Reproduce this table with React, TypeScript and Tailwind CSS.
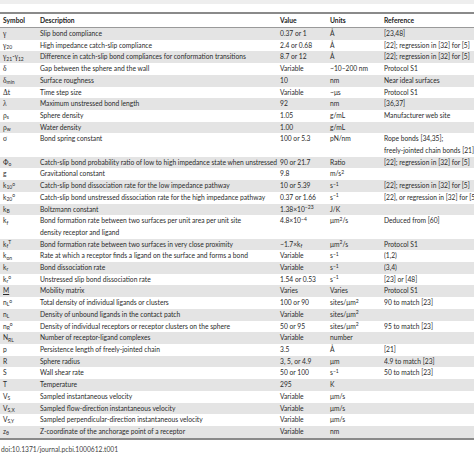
import type { ReactNode } from "react";

type Row = {
  sym: ReactNode;
  desc: ReactNode;
  value: ReactNode;
  units: ReactNode;
  refs?: ReactNode;
};

// greek letters look like they come from a serif face in the original
function G({ children }: { children: ReactNode }) {
  return (
    <span className="font-['Liberation_Serif',serif] text-[7.5px]">
      {children}
    </span>
  );
}

function Sb({ children }: { children: ReactNode }) {
  return <sub className="text-[5px]">{children}</sub>;
}

function Sp({ children }: { children: ReactNode }) {
  return <sup className="text-[5px]">{children}</sup>;
}

const invS = (
  <>
    s<Sp>−1</Sp>
  </>
);
const sitesUm2 = (
  <>
    sites/μm<Sp>2</Sp>
  </>
);
const reg = "[22]; regression in [32] for [5]";

const rows: Row[] = [
  { sym: <G>γ</G>, desc: "Slip bond compliance", value: "0.37 or 1", units: "Å", refs: "[23,48]" },
  { sym: <><G>γ</G><Sb>20</Sb></>, desc: "High impedance catch-slip compliance", value: "2.4 or 0.68", units: "Å", refs: reg },
  {
    sym: <><G>γ</G><Sb>21</Sb>-<G>γ</G><Sb>12</Sb></>,
    desc: "Difference in catch-slip bond compliances for conformation transitions",
    value: "8.7 or 12",
    units: "Å",
    refs: reg,
  },
  { sym: <G>δ</G>, desc: "Gap between the sphere and the wall", value: "Variable", units: "~10–200 nm", refs: "Protocol S1" },
  { sym: <><G>δ</G><Sb>min</Sb></>, desc: "Surface roughness", value: "10", units: "nm", refs: "Near ideal surfaces" },
  { sym: <><G>Δ</G>t</>, desc: "Time step size", value: "Variable", units: "~μs", refs: "Protocol S1" },
  { sym: <G>λ</G>, desc: "Maximum unstressed bond length", value: "92", units: "nm", refs: "[36,37]" },
  { sym: <><G>ρ</G><Sb>s</Sb></>, desc: "Sphere density", value: "1.05", units: "g/mL", refs: "Manufacturer web site" },
  { sym: <><G>ρ</G><Sb>w</Sb></>, desc: "Water density", value: "1.00", units: "g/mL" },
  {
    sym: <G>σ</G>,
    desc: "Bond spring constant",
    value: "100 or 5.3",
    units: "pN/nm",
    refs: (
      <>
        Rope bonds [34,35];
        <br />
        freely-jointed chain bonds [21]
      </>
    ),
  },
  {
    sym: <><G>Φ</G><Sb>o</Sb></>,
    desc: "Catch-slip bond probability ratio of low to high impedance state when unstressed",
    value: "90 or 21.7",
    units: "Ratio",
    refs: reg,
  },
  { sym: "g", desc: "Gravitational constant", value: "9.8", units: <>m/s<Sp>2</Sp></> },
  {
    sym: <>k<Sb>10</Sb><Sp>o</Sp></>,
    desc: "Catch-slip bond dissociation rate for the low impedance pathway",
    value: "10 or 5.39",
    units: invS,
    refs: reg,
  },
  {
    sym: <>k<Sb>20</Sb><Sp>o</Sp></>,
    desc: "Catch-slip bond unstressed dissociation rate for the high impedance pathway",
    value: "0.37 or 1.66",
    units: invS,
    refs: "[22], or regression in [32] for [5]",
  },
  { sym: <>k<Sb>B</Sb></>, desc: "Boltzmann constant", value: <>1.38×10<Sp>−23</Sp></>, units: "J/K" },
  {
    sym: <>k<Sb>f</Sb></>,
    desc: (
      <>
        Bond formation rate between two surfaces per unit area per unit site
        <br />
        density receptor and ligand
      </>
    ),
    value: <>4.8×10<Sp>−4</Sp></>,
    units: <>μm<Sp>2</Sp>/s</>,
    refs: "Deduced from [60]",
  },
  {
    sym: <>k<Sb>f</Sb><Sp>T</Sp></>,
    desc: "Bond formation rate between two surfaces in very close proximity",
    value: <>~1.7×k<Sb>f</Sb></>,
    units: <>μm<Sp>2</Sp>/s</>,
    refs: "Protocol S1",
  },
  {
    sym: <>k<Sb>on</Sb></>,
    desc: "Rate at which a receptor finds a ligand on the surface and forms a bond",
    value: "Variable",
    units: invS,
    refs: "(1,2)",
  },
  { sym: <>k<Sb>r</Sb></>, desc: "Bond dissociation rate", value: "Variable", units: invS, refs: "(3,4)" },
  { sym: <>k<Sb>r</Sb><Sp>o</Sp></>, desc: "Unstressed slip bond dissociation rate", value: "1.54 or 0.53", units: invS, refs: "[23] or [48]" },
  { sym: <span className="underline">M</span>, desc: "Mobility matrix", value: "Varies", units: "Varies", refs: "Protocol S1" },
  { sym: <>n<Sb>L</Sb><Sp>o</Sp></>, desc: "Total density of individual ligands or clusters", value: "100 or 90", units: sitesUm2, refs: "90 to match [23]" },
  { sym: <>n<Sb>L</Sb></>, desc: "Density of unbound ligands in the contact patch", value: "Variable", units: sitesUm2 },
  {
    sym: <>n<Sb>R</Sb><Sp>o</Sp></>,
    desc: "Density of individual receptors or receptor clusters on the sphere",
    value: "50 or 95",
    units: sitesUm2,
    refs: "95 to match [23]",
  },
  { sym: <>N<Sb>RL</Sb></>, desc: "Number of receptor-ligand complexes", value: "Variable", units: "number" },
  { sym: "p", desc: "Persistence length of freely-jointed chain", value: "3.5", units: "Å", refs: "[21]" },
  { sym: "R", desc: "Sphere radius", value: "3, 5, or 4.9", units: "μm", refs: "4.9 to match [23]" },
  { sym: "S", desc: "Wall shear rate", value: "50 or 100", units: invS, refs: "50 to match [23]" },
  { sym: "T", desc: "Temperature", value: "295", units: "K" },
  { sym: <>V<Sb>S</Sb></>, desc: "Sampled instantaneous velocity", value: "Variable", units: "μm/s" },
  { sym: <>V<Sb>S,X</Sb></>, desc: "Sampled flow-direction instantaneous velocity", value: "Variable", units: "μm/s" },
  { sym: <>V<Sb>S,Y</Sb></>, desc: "Sampled perpendicular-direction instantaneous velocity", value: "Variable", units: "μm/s" },
  { sym: <>z<Sb>θ</Sb></>, desc: "Z-coordinate of the anchorage point of a receptor", value: "Variable", units: "nm" },
];

const cols = "grid grid-cols-[37px_240px_50px_54px_1fr] pl-[3px]";

export default function App() {
  return (
    <div className="w-[474px] h-[455px] overflow-hidden bg-white text-[6.7px] text-[#2b2b2b] font-['Lato',sans-serif]">
      <div className="h-[4px] bg-[#eeeeee]" />
      <div className="h-[8px]" />
      <div className="border-t-[2px] border-[#8a8a8a]" />
      <div className={`${cols} h-[13px] items-center font-bold text-[#222]`}>
        <div>Symbol</div>
        <div>Description</div>
        <div>Value</div>
        <div>Units</div>
        <div>Reference</div>
      </div>
      <div className="border-t border-[#9a9a9a]" />
      <div>
        {rows.map((r, i) => (
          <div
            key={i}
            className={`${cols} leading-[11.7px] whitespace-nowrap ${
              i % 2 === 0 ? "bg-[#e4e4e4]" : "bg-white"
            }`}
          >
            <div>{r.sym}</div>
            <div>{r.desc}</div>
            <div>{r.value}</div>
            <div>{r.units}</div>
            <div className="overflow-hidden">{r.refs}</div>
          </div>
        ))}
      </div>
      <div className="border-t-[2px] border-[#8a8a8a]" />
      <div className="pl-[1px] pt-[4px] leading-[10px] text-[#444]">
        doi:10.1371/journal.pcbi.1000612.t001
      </div>
    </div>
  );
}
